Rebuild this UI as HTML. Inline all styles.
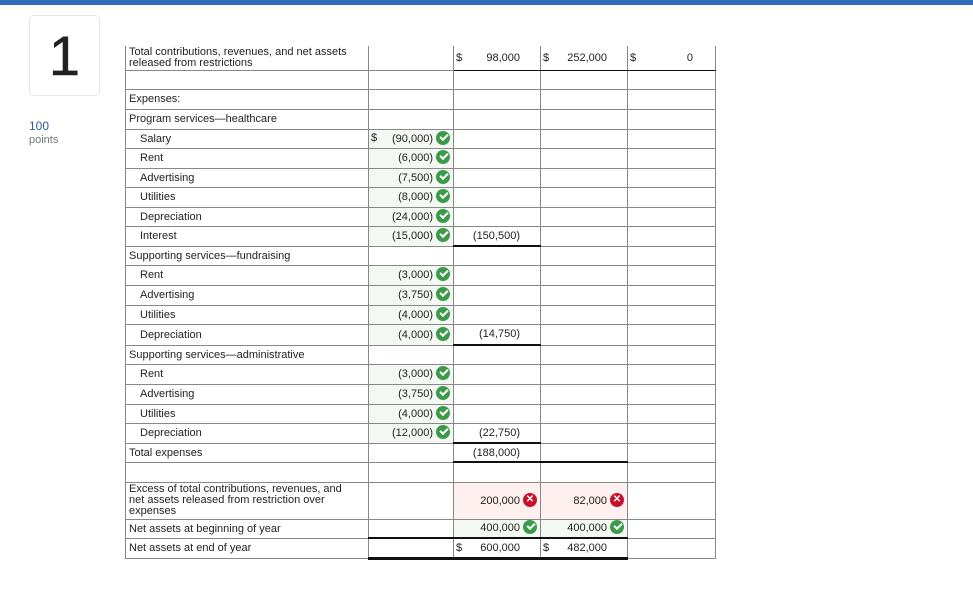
<!DOCTYPE html>
<html><head><meta charset="utf-8"><style>
body{margin:0;width:973px;height:601px;background:#fff;font-family:"Liberation Sans",Arial,sans-serif;position:relative;overflow:hidden}
.bar{position:absolute;left:0;top:0;width:973px;height:5px;background:#2f6fba}
.qn{position:absolute;left:29px;top:15px;width:69px;height:79px;border:1px solid #e6e6e6;border-radius:5px;font-size:56px;color:#222;text-align:center;line-height:79px;-webkit-text-stroke:0.5px #222}
.pts{position:absolute;left:29px;top:119px;font-size:12px;color:#2a5ca8}
.pl{position:absolute;left:29px;top:134px;font-size:11px;color:#777}
table{position:absolute;left:125px;top:46px;border-collapse:collapse;table-layout:fixed;font-size:11px;color:#222}
td{border:1px solid #888;padding:0 3px;height:19px;box-sizing:border-box;white-space:nowrap;overflow:hidden}
td.r{text-align:right}
td.i{padding-left:14px}
.ok{background:#f3f8f3}
.bad{background:#fdf0ef}
.c{display:inline-block;width:14px;height:14px;border-radius:50%;background:#3e9a4b;vertical-align:middle;margin-left:3px;position:relative;top:-1px}
.c:after{content:"";position:absolute;left:3.5px;top:3px;width:6px;height:3px;border-left:2px solid #fff;border-bottom:2px solid #fff;transform:rotate(-45deg)}
.x{display:inline-block;width:14px;height:14px;border-radius:50%;background:#c8102e;vertical-align:middle;margin-left:3px;color:#fff;font-size:10px;line-height:14px;text-align:center;font-weight:bold;position:relative;top:-1px}
.d{float:left;margin-left:-1px}
.bt{border-top:2px solid #111}
.bb{border-bottom:2px solid #111}
.p{padding-right:20px}
</style></head><body>
<div class="bar"></div>
<div class="qn">1</div>
<div class="pts">100</div>
<div class="pl">points</div>
<table>
<colgroup><col style="width:243px"><col style="width:85px"><col style="width:87px"><col style="width:87px"><col style="width:88px"></colgroup>
<tr style="height:24px"><td style="border-top:none;line-height:11px;height:24px">Total contributions, revenues, and net assets<br>released from restrictions</td><td style="border-top:none"></td><td class="r p" style="border-top:none;border-bottom:1px solid #111"><span class="d">$</span>98,000</td><td class="r p" style="border-top:none;border-bottom:1px solid #111"><span class="d">$</span>252,000</td><td class="r" style="border-top:none;border-bottom:1px solid #111;padding-right:22px"><span class="d">$</span>0</td></tr>
<tr><td></td><td></td><td></td><td></td><td></td></tr>
<tr style="height:20px"><td>Expenses:</td><td></td><td></td><td></td><td></td></tr>
<tr style="height:20px"><td>Program services—healthcare</td><td></td><td></td><td></td><td></td></tr>
<tr><td class="i">Salary</td><td class="r ok"><span class="d">$</span>(90,000)<span class="c"></span></td><td></td><td></td><td></td></tr>
<tr style="height:20px"><td class="i">Rent</td><td class="r ok">(6,000)<span class="c"></span></td><td></td><td></td><td></td></tr>
<tr><td class="i">Advertising</td><td class="r ok">(7,500)<span class="c"></span></td><td></td><td></td><td></td></tr>
<tr style="height:20px"><td class="i">Utilities</td><td class="r ok">(8,000)<span class="c"></span></td><td></td><td></td><td></td></tr>
<tr><td class="i">Depreciation</td><td class="r ok">(24,000)<span class="c"></span></td><td></td><td></td><td></td></tr>
<tr style="height:20px"><td class="i">Interest</td><td class="r ok">(15,000)<span class="c"></span></td><td class="r bb p">(150,500)</td><td></td><td></td></tr>
<tr><td>Supporting services—fundraising</td><td></td><td></td><td></td><td></td></tr>
<tr style="height:20px"><td class="i">Rent</td><td class="r ok">(3,000)<span class="c"></span></td><td></td><td></td><td></td></tr>
<tr style="height:20px"><td class="i">Advertising</td><td class="r ok">(3,750)<span class="c"></span></td><td></td><td></td><td></td></tr>
<tr><td class="i">Utilities</td><td class="r ok">(4,000)<span class="c"></span></td><td></td><td></td><td></td></tr>
<tr style="height:21px"><td class="i">Depreciation</td><td class="r ok">(4,000)<span class="c"></span></td><td class="r bb p">(14,750)</td><td></td><td></td></tr>
<tr><td>Supporting services—administrative</td><td></td><td></td><td></td><td></td></tr>
<tr style="height:20px"><td class="i">Rent</td><td class="r ok">(3,000)<span class="c"></span></td><td></td><td></td><td></td></tr>
<tr style="height:20px"><td class="i">Advertising</td><td class="r ok">(3,750)<span class="c"></span></td><td></td><td></td><td></td></tr>
<tr><td class="i">Utilities</td><td class="r ok">(4,000)<span class="c"></span></td><td></td><td></td><td></td></tr>
<tr style="height:20px"><td class="i">Depreciation</td><td class="r ok">(12,000)<span class="c"></span></td><td class="r bb p">(22,750)</td><td></td><td></td></tr>
<tr><td>Total expenses</td><td></td><td class="r bb p">(188,000)</td><td class="bb"></td><td></td></tr>
<tr style="height:20px"><td></td><td></td><td></td><td></td><td></td></tr>
<tr style="height:37px"><td style="line-height:11px">Excess of total contributions, revenues, and<br>net assets released from restriction over<br>expenses</td><td></td><td class="r bad">200,000<span class="x">✕</span></td><td class="r bad">82,000<span class="x">✕</span></td><td></td></tr>
<tr><td>Net assets at beginning of year</td><td></td><td class="r ok">400,000<span class="c"></span></td><td class="r ok">400,000<span class="c"></span></td><td></td></tr>
<tr style="height:20px"><td>Net assets at end of year</td><td class="bt" style="border-bottom:3px solid #111"></td><td class="r bt p" style="border-bottom:3px solid #111"><span class="d">$</span>600,000</td><td class="r bt p" style="border-bottom:3px solid #111"><span class="d">$</span>482,000</td><td></td></tr>
</table>
</body></html>
